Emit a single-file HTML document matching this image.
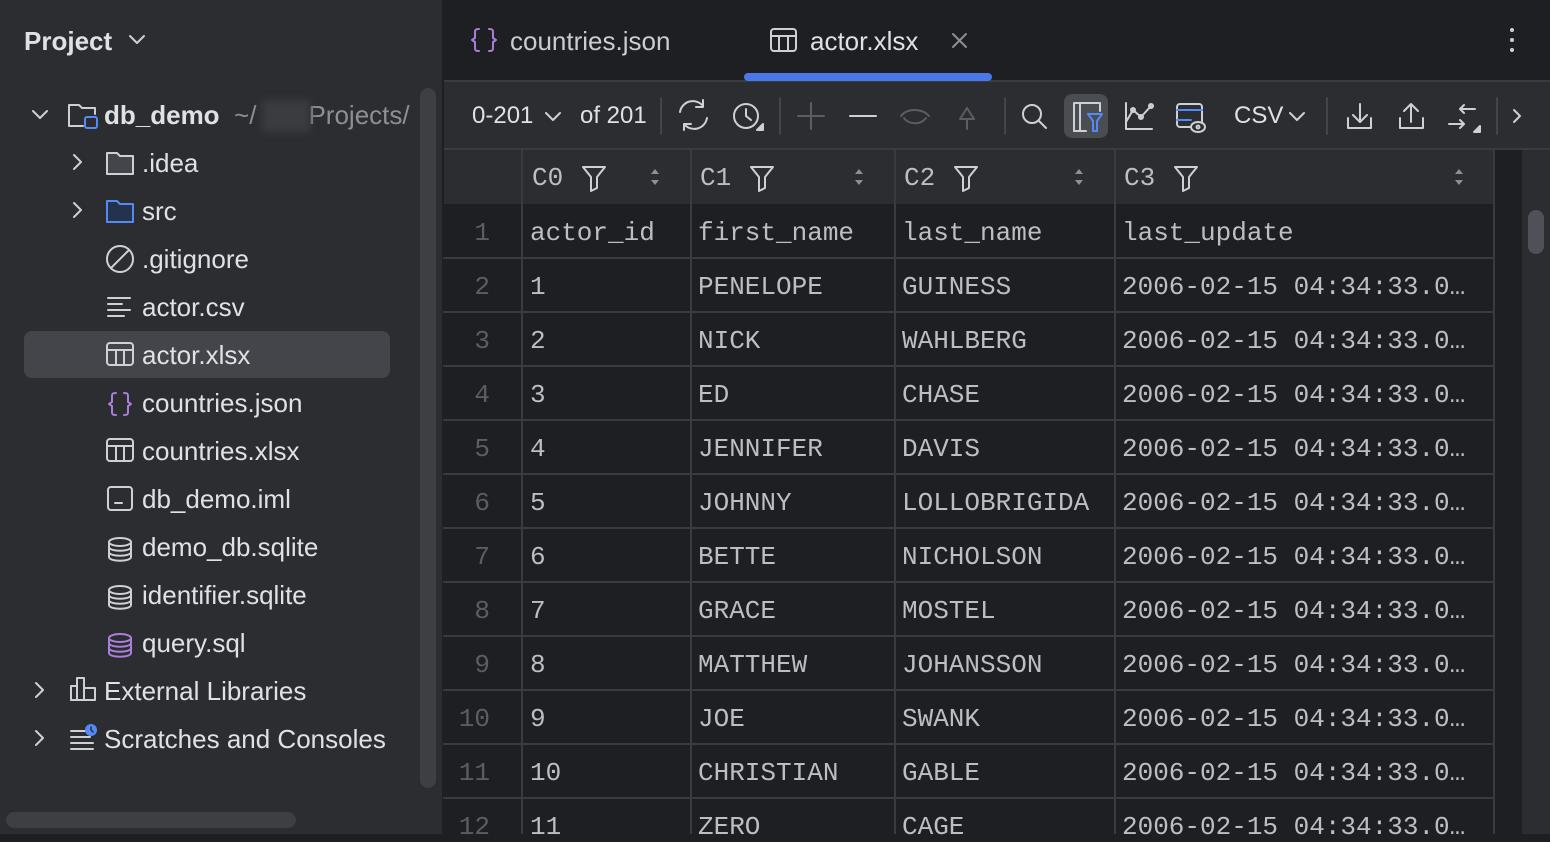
<!DOCTYPE html>
<html><head><meta charset="utf-8"><style>
*{margin:0;padding:0;box-sizing:border-box}
body{width:1550px;height:834px;overflow:hidden;background:#1e1f22;position:relative;font-family:"Liberation Sans",sans-serif;color:#dfe1e5}
.a{position:absolute;white-space:nowrap}
.ui{font-size:26px;line-height:30px}
.m{font-family:"Liberation Mono",monospace;font-size:26px;line-height:30px;color:#bcbec4}
.rn{color:#5a5d63;text-align:right;width:60px}
svg{position:absolute;left:0;top:0}
</style></head><body>
<div class="a" style="left:0;top:0;width:442px;height:834px;background:#2b2d30"></div>
<div class="a" style="left:442px;top:0;width:2px;height:834px;background:#1e1f22"></div>
<div class="a" style="left:24px;top:331px;width:366px;height:47px;background:#43454a;border-radius:8px"></div>
<div class="a ui" style="left:24px;top:26px;font-weight:bold;font-size:26px">Project</div>
<div class="a ui" style="left:104px;top:100px;width:310px;overflow:hidden"><b>db_demo</b> <span style="color:#8c8f94">&nbsp;~/<span style="color:transparent">xxxx</span>Projects/</span></div>
<div class="a" style="left:262px;top:100px;width:48px;height:32px;background:#3a3c40;filter:blur(4px)"></div>
<div class="a" style="left:420px;top:88px;width:16px;height:700px;background:#3d3f43;border-radius:8px"></div>
<div class="a" style="left:6px;top:812px;width:290px;height:16px;background:#3d3f43;border-radius:8px"></div>
<div class="a ui" style="left:142px;top:148px">.idea</div>
<div class="a ui" style="left:142px;top:196px">src</div>
<div class="a ui" style="left:142px;top:244px">.gitignore</div>
<div class="a ui" style="left:142px;top:292px">actor.csv</div>
<div class="a ui" style="left:142px;top:340px">actor.xlsx</div>
<div class="a ui" style="left:142px;top:388px">countries.json</div>
<div class="a ui" style="left:142px;top:436px">countries.xlsx</div>
<div class="a ui" style="left:142px;top:484px">db_demo.iml</div>
<div class="a ui" style="left:142px;top:532px">demo_db.sqlite</div>
<div class="a ui" style="left:142px;top:580px">identifier.sqlite</div>
<div class="a ui" style="left:142px;top:628px">query.sql</div>
<div class="a ui" style="left:104px;top:676px">External Libraries</div>
<div class="a ui" style="left:104px;top:724px">Scratches and Consoles</div>

<div class="a" style="left:444px;top:80px;width:1106px;height:2px;background:#393b40"></div>
<div class="a" style="left:444px;top:82px;width:1106px;height:66px;background:#2b2d30"></div>
<div class="a" style="left:444px;top:148px;width:1106px;height:2px;background:#393b40"></div>
<div class="a" style="left:744px;top:73px;width:248px;height:8px;background:#4a78e8;border-radius:4px"></div>
<div class="a ui" style="left:510px;top:26px;color:#c9ccd1">countries.json</div>
<div class="a ui" style="left:810px;top:26px">actor.xlsx</div>
<div class="a ui" style="left:472px;top:101px;font-size:24px">0-201</div>
<div class="a ui" style="left:580px;top:101px;font-size:24px">of 201</div>
<div class="a ui" style="left:1234px;top:101px;font-size:24px">CSV</div>
<div class="a" style="left:1064px;top:94px;width:44px;height:44px;background:#4a4d52;border-radius:8px"></div>

<div class="a" style="left:444px;top:150px;width:1050px;height:54px;background:#2b2d30"></div>
<div class="a" style="left:1522px;top:150px;width:28px;height:684px;background:#2b2d30"></div>
<div class="a" style="left:1528px;top:210px;width:16px;height:44px;background:#4e5157;border-radius:8px"></div>
<div class="a m" style="left:532px;top:163px">C0</div>
<div class="a m" style="left:700px;top:163px">C1</div>
<div class="a m" style="left:904px;top:163px">C2</div>
<div class="a m" style="left:1124px;top:163px">C3</div>

<div id="g"></div>

<svg width="1550" height="834" fill="none" stroke-linecap="round" stroke-linejoin="round">
<g stroke="#393b40" stroke-width="2">
<line x1="522" y1="150" x2="522" y2="834"/><line x1="691" y1="150" x2="691" y2="834"/><line x1="895" y1="150" x2="895" y2="834"/><line x1="1115" y1="150" x2="1115" y2="834"/><line x1="1494" y1="150" x2="1494" y2="834"/>
<line x1="444" y1="258" x2="1494" y2="258"/><line x1="444" y1="312" x2="1494" y2="312"/><line x1="444" y1="366" x2="1494" y2="366"/><line x1="444" y1="420" x2="1494" y2="420"/><line x1="444" y1="474" x2="1494" y2="474"/><line x1="444" y1="528" x2="1494" y2="528"/><line x1="444" y1="582" x2="1494" y2="582"/><line x1="444" y1="636" x2="1494" y2="636"/><line x1="444" y1="690" x2="1494" y2="690"/><line x1="444" y1="744" x2="1494" y2="744"/><line x1="444" y1="798" x2="1494" y2="798"/>
</g>
<g stroke="#ced0d6" stroke-width="2">
<path d="M130 36l7 7 7-7"/>
<path d="M33 111l7 7 7-7"/>
<path d="M74 155l7 7-7 7M74 203l7 7-7 7M36 683l7 7-7 7M36 731l7 7-7 7"/>
<path d="M69 126V105h10l3 3h13v6M69 126h14"/>
<rect x="85" y="117" width="12" height="11" rx="2" stroke="#548af7"/>
<path d="M107 174v-21h10l3 3h13v18z" fill="#43454a"/>
<path d="M107 222v-21h10l3 3h13v18z" fill="#25324d" stroke="#548af7"/>
<circle cx="120" cy="259" r="13"/><path d="M112 267l16-16"/>
<path d="M108 298h22M108 304h14M108 310h22M108 316h16"/>
<rect x="107" y="343" width="26" height="22" rx="3"/><path d="M107 350h26M116 350v15M124 350v15"/>
<rect x="107" y="439" width="26" height="22" rx="3"/><path d="M107 446h26M116 446v15M124 446v15"/>
<rect x="108" y="487" width="24" height="23" rx="3"/><path d="M115 503h7"/>
<g><ellipse cx="120" cy="542" rx="11" ry="4"/><path d="M109 542v15c0 5 22 5 22 0v-15M109 547c0 5 22 5 22 0M109 552c0 5 22 5 22 0"/></g>
<g><ellipse cx="120" cy="590" rx="11" ry="4"/><path d="M109 590v15c0 5 22 5 22 0v-15M109 595c0 5 22 5 22 0M109 600c0 5 22 5 22 0"/></g>
<g stroke="#a97fdb"><ellipse cx="120" cy="638" rx="11" ry="4"/><path d="M109 638v15c0 5 22 5 22 0v-15M109 643c0 5 22 5 22 0M109 648c0 5 22 5 22 0"/></g>
<path d="M116 393c-4 0-4 1-4 4v5l-3 2 3 2v5c0 3 0 4 4 4M124 393c4 0 4 1 4 4v5l3 2-3 2v5c0 3 0 4-4 4" stroke="#a97fdb"/>
<path d="M71 700v-14h6v14M77 700v-22h7v22M84 700v-12h11v12zM71 700h24"/>
<path d="M71 731h14M71 737h19M71 743h22M71 749h22"/>
<circle cx="91" cy="730" r="6" fill="#548af7" stroke="none"/><path d="M91 727v3l2 2" stroke="#2b2d30" stroke-width="1.5"/>
<path d="M479 29c-4 0-4 1-4 4v5l-3 2 3 2v5c0 3 0 4 4 4M489 29c4 0 4 1 4 4v5l3 2-3 2v5c0 3 0 4-4 4" stroke="#a97fdb"/>
<rect x="771" y="29" width="25" height="22" rx="3"/><path d="M771 36h25M779 36v15M788 36v15"/>
<path d="M953 34l13 13M966 34l-13 13" stroke="#8c8f94"/>
<circle cx="1512" cy="30" r="2" fill="#ced0d6" stroke="none"/><circle cx="1512" cy="40" r="2" fill="#ced0d6" stroke="none"/><circle cx="1512" cy="50" r="2" fill="#ced0d6" stroke="none"/>
<path d="M546 113l7 7 7-7M1290 113l7 7 7-7"/>
<g stroke="#43454a"><path d="M661 98v36M780 98v36M1005 98v36M1327 98v36M1497 98v36"/></g>
<path d="M680 112a13 13 0 0 1 23-6M707 118a13 13 0 0 1-23 6M703 100v7h-7M684 130v-6h7"/>
<circle cx="746" cy="116" r="12"/><path d="M746 109v7l5 4"/><path d="M757 130l6-6v6z" fill="#ced0d6"/>
<g stroke="#5a5d63"><path d="M811 103v26M798 116h26"/><path d="M901 116c6-8 21-8 28 0M904 118c4 6 16 8 22 0"/><path d="M967 129v-10h-7l7-11 7 11h-7"/></g>
<path d="M850 116h26"/>
<circle cx="1032" cy="114" r="9"/><path d="M1039 121l7 7"/>
<path d="M1086 131h-12v-28h26v8M1080 103v28"/><path d="M1088 114h14l-5 7v10h-4v-10z" stroke="#548af7"/>
<path d="M1126 103v26h26M1126 122l7-12 8 7 10-11"/><circle cx="1133" cy="110" r="2"/><circle cx="1141" cy="117" r="2"/><circle cx="1151" cy="106" r="2"/>
<rect x="1177" y="104" width="25" height="23" rx="3"/><path d="M1177 110h25M1177 120h14" stroke="#548af7"/><ellipse cx="1198" cy="127" rx="7" ry="5" fill="#2b2d30"/><circle cx="1198" cy="127" r="1.5"/>
<path d="M1348 118v10h23v-10M1360 104v18M1353 115l7 7 7-7"/>
<path d="M1400 118v10h23v-10M1411 122v-18M1404 111l7-7 7 7"/>
<path d="M1460 109h15M1464 105l-4 4 4 4M1449 124h15M1460 120l4 4-4 4"/><path d="M1474 132l6-6v6z" fill="#ced0d6"/>
<path d="M1514 110l6 6-6 6"/>
<path d="M583 167h22l-8 10v11l-6 3v-14z M751 167h22l-8 10v11l-6 3v-14z M955 167h22l-8 10v11l-6 3v-14z M1175 167h22l-8 10v11l-6 3v-14z"/>
</g>
<g fill="#8c8f94"><path d="M651 174l4-5 4 5zM651 180l4 5 4-5z M855 174l4-5 4 5zM855 180l4 5 4-5z M1075 174l4-5 4 5zM1075 180l4 5 4-5z M1455 174l4-5 4 5zM1455 180l4 5 4-5z"/></g>
</svg>
<script>
var d=[["actor_id","first_name","last_name","last_update"],["1","PENELOPE","GUINESS"],["2","NICK","WAHLBERG"],["3","ED","CHASE"],["4","JENNIFER","DAVIS"],["5","JOHNNY","LOLLOBRIGIDA"],["6","BETTE","NICHOLSON"],["7","GRACE","MOSTEL"],["8","MATTHEW","JOHANSSON"],["9","JOE","SWANK"],["10","CHRISTIAN","GABLE"],["11","ZERO","CAGE"]];
var h="";
d.forEach(function(r,i){var y=218+i*54;
h+='<div class="a m rn" style="left:430px;top:'+y+'px">'+(i+1)+'</div>';
h+='<div class="a m" style="left:530px;top:'+y+'px">'+r[0]+'</div>';
h+='<div class="a m" style="left:698px;top:'+y+'px">'+r[1]+'</div>';
h+='<div class="a m" style="left:902px;top:'+y+'px">'+r[2]+'</div>';
h+='<div class="a m" style="left:1122px;top:'+y+'px">'+(r[3]||"2006-02-15 04:34:33.0…")+'</div>';});
document.getElementById("g").innerHTML=h;
</script>
</body></html>
